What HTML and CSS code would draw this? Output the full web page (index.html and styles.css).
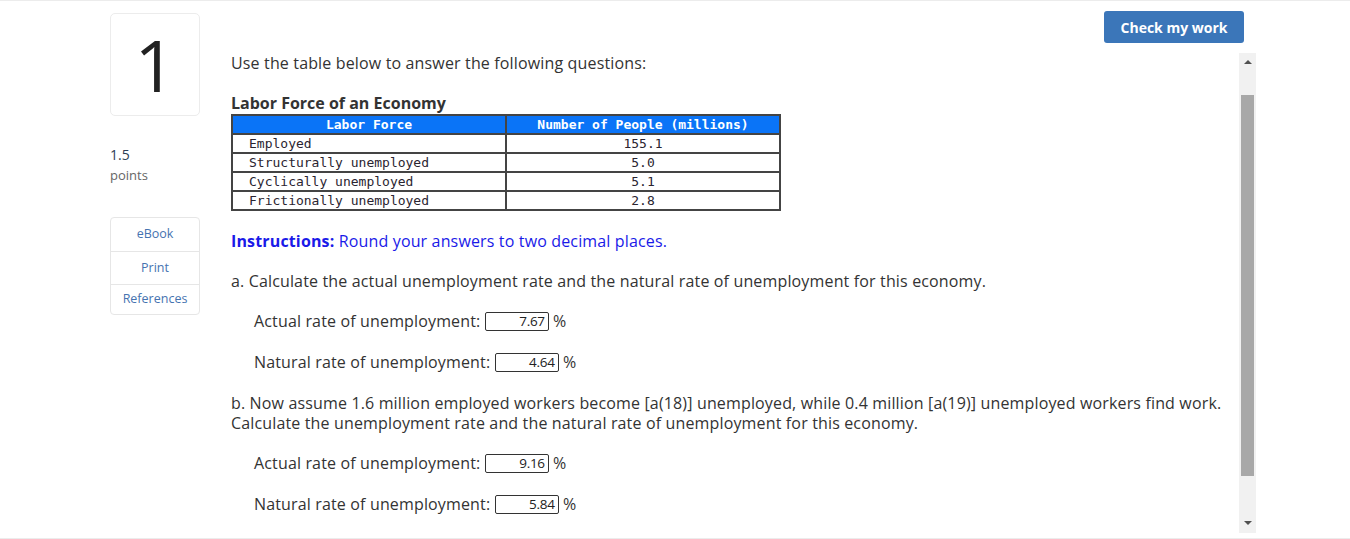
FILE: index.html
```html
<!DOCTYPE html>
<html>
<head>
<meta charset="utf-8">
<link rel="stylesheet" href="styles.css">
</head>
<body>
<div class="page">
  <aside class="sidebar">
    <div class="qnum">1</div>
    <div class="points">
      <div class="pval">1.5</div>
      <div class="plabel">points</div>
    </div>
    <div class="tools">
      <div class="tool t1">eBook</div>
      <div class="tool t2">Print</div>
      <div class="tool t3">References</div>
    </div>
  </aside>
  <main class="main">
    <div class="topbar">
      <button class="check">Check my work</button>
    </div>
    <div class="scrollarea">
      <div class="content">
        <p class="line">Use the table below to answer the following questions:</p>
        <div class="ttitle">Labor Force of an Economy</div>
        <table class="data">
          <thead>
            <tr><th class="c1">Labor Force</th><th>Number of People (millions)</th></tr>
          </thead>
          <tbody>
            <tr><td class="lbl">Employed</td><td class="num">155.1</td></tr>
            <tr><td class="lbl">Structurally unemployed</td><td class="num">5.0</td></tr>
            <tr><td class="lbl">Cyclically unemployed</td><td class="num">5.1</td></tr>
            <tr><td class="lbl">Frictionally unemployed</td><td class="num">2.8</td></tr>
          </tbody>
        </table>
        <p class="line instr"><b>Instructions:</b> Round your answers to two decimal places.</p>
        <p class="line">a. Calculate the actual unemployment rate and the natural rate of unemployment for this economy.</p>
        <div class="ans">Actual rate of unemployment: <span class="box">7.67</span> %</div>
        <div class="ans">Natural rate of unemployment: <span class="box">4.64</span> %</div>
        <p class="line">b. Now assume 1.6 million employed workers become [a(18)] unemployed, while 0.4 million [a(19)] unemployed workers find work.<br>Calculate the unemployment rate and the natural rate of unemployment for this economy.</p>
        <div class="ans">Actual rate of unemployment: <span class="box">9.16</span> %</div>
        <div class="ans">Natural rate of unemployment: <span class="box">5.84</span> %</div>
      </div>
      <div class="sbar">
        <div class="arrow up"></div>
        <div class="thumb"></div>
        <div class="arrow down"></div>
      </div>
    </div>
  </main>
</div>
</body>
</html>
```

FILE: styles.css
```css
* { box-sizing: border-box; }
html, body { margin: 0; padding: 0; background: #fff; }
body {
  font-family: "Open Sans", "Liberation Sans", sans-serif;
  color: #333;
  font-size: 16px;
  letter-spacing: 0.15px;
}
.page {
  height: 539px;
  border-top: 1px solid #ececec;
  border-bottom: 1px solid #ececec;
  display: flex;
  padding-left: 110px;
  overflow: hidden;
}
.sidebar {
  width: 90px;
  padding-top: 12px;
  display: flex;
  flex-direction: column;
  letter-spacing: 0;
}
.qnum {
  width: 90px;
  height: 103px;
  border: 1px solid #ececec;
  border-radius: 5px;
  display: flex;
  align-items: center;
  justify-content: center;
  font-family: "Open Sans", sans-serif;
  font-size: 72px;
  font-weight: 400;
  color: #222;
  line-height: 1;
  padding-bottom: 2px;
}
.points {
  margin-top: 29px;
  line-height: 20px;
}
.pval { font-size: 14px; color: #2d3e55; }
.plabel { font-size: 13px; color: #666; }
.tools {
  margin-top: 32px;
  border: 1px solid #e6e6e6;
  border-radius: 4px;
  font-size: 12.5px;
  color: #4673b0;
  text-align: center;
}
.tool { border-top: 1px solid #e6e6e6; }
.tool:first-child { border-top: 0; }
.t1 { height: 33px; line-height: 31px; }
.t2 { height: 33px; line-height: 32px; }
.t3 { height: 30px; line-height: 27px; }

.main {
  flex: 1;
  display: flex;
  flex-direction: column;
  padding-right: 94px;
}
.topbar {
  display: flex;
  justify-content: flex-end;
  padding-top: 10px;
  padding-right: 12px;
  height: 52px;
}
.check {
  width: 140px;
  height: 32px;
  border: 0;
  border-radius: 3px;
  background: #3b76b9;
  color: #fff;
  font-family: "Open Sans", "Liberation Sans", sans-serif;
  font-weight: 700;
  font-size: 14px;
  padding: 0;
}
.scrollarea {
  display: flex;
  height: 480px;
}
.content {
  flex: 1;
  padding-left: 31px;
  overflow: hidden;
}
.line {
  margin: 0 0 20px;
  line-height: 20px;
}
.ttitle {
  font-weight: 700;
  line-height: 20px;
  margin-top: 20px;
  letter-spacing: 0;
}
.data {
  border-collapse: collapse;
  width: 550px;
  margin-top: 1px;
  margin-bottom: 20px;
  font-family: "DejaVu Sans Mono", "Liberation Mono", monospace;
  font-size: 13px;
  letter-spacing: 0;
  color: #2a2430;
}
.data th, .data td {
  border: 2px solid #444;
  height: 19px;
  padding: 0;
  line-height: 15px;
}
.data th.c1 { width: 274px; }
.data th {
  background: #0a74f7;
  color: #fff;
  font-weight: 700;
  text-align: center;
}
.data td.lbl { padding-left: 16px; }
.data td.num { text-align: center; }
.instr { color: #1a1ae8; }
.ans {
  margin: 0 0 20px;
  padding-left: 23px;
  height: 21px;
  line-height: 21px;
}
.box {
  display: inline-flex;
  align-items: center;
  justify-content: flex-end;
  width: 64px;
  height: 19px;
  border: 1px solid #333;
  border-radius: 2px;
  padding-right: 3px;
  font-size: 13.5px;
  letter-spacing: -0.3px;
  vertical-align: middle;
  margin-top: -2px;
  color: #222;
}
.sbar {
  width: 17px;
  background: #f1f1f1;
  display: flex;
  flex-direction: column;
  align-items: center;
}
.arrow {
  width: 0;
  height: 0;
  border-left: 4px solid transparent;
  border-right: 4px solid transparent;
}
.up {
  margin-top: 7px;
  border-bottom: 4px solid #505050;
}
.thumb {
  width: 13px;
  height: 381px;
  margin-top: 31px;
  background: #a8a8a8;
}
.down {
  margin-top: auto;
  margin-bottom: 8px;
  border-top: 4px solid #505050;
}
```
